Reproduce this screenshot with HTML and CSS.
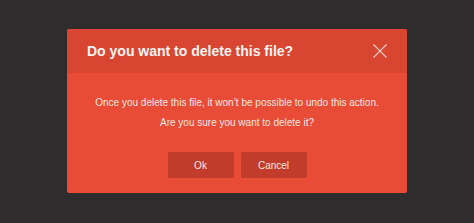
FILE: index.html
```html
<!DOCTYPE html>
<html lang="en">
<head>
    <meta charset="UTF-8">
    <title>Delete file</title>
    <link rel="stylesheet" href="styles.css">
</head>
<body>
    <div class="overlay">
        <div class="modal">
            <div class="modal-header">
                <h2>Do you want to delete this file?</h2>
                <button class="close-btn" aria-label="Close">
                    <svg width="14" height="14" viewBox="0 0 14 14">
                        <path d="M0.5 0.5 L13.5 13.5 M13.5 0.5 L0.5 13.5" stroke="#f4c9c0" stroke-width="1.2" fill="none"/>
                    </svg>
                </button>
            </div>
            <div class="modal-body">
                <p>Once you delete this file, it won’t be possible to undo this action.</p>
                <p>Are you sure you want to delete it?</p>
            </div>
            <div class="modal-actions">
                <button class="btn">Ok</button>
                <button class="btn">Cancel</button>
            </div>
        </div>
    </div>
</body>
</html>
```
FILE: styles.css
```css
:root {
    --backdrop: #2f2c2d;
    --modal-bg: #e84c36;
    --header-bg: #d84531;
    --btn-bg: #c13c2b;
    --text: #fbe7e3;
}

body {
    margin: 0;
    background-color: var(--backdrop);
    font-family: "Liberation Sans", Arial, sans-serif;
}

.overlay {
    height: 223px;
    padding-top: 29px;
    box-sizing: border-box;
}

.modal {
    width: 340px;
    margin-left: 67px;
    background-color: var(--modal-bg);
    border-radius: 2px;
    color: var(--text);
}

.modal-header {
    height: 44px;
    background-color: var(--header-bg);
    border-radius: 2px 2px 0 0;
    display: flex;
    align-items: center;
    justify-content: space-between;
    padding: 0 20px;
}

.modal-header h2 {
    margin: 0;
    font-size: 14px;
    font-weight: bold;
    color: #fff4f1;
}

.close-btn {
    background: none;
    border: none;
    padding: 0;
    display: flex;
}

.modal-body {
    text-align: center;
    padding-top: 24px;
}

.modal-body p {
    margin: 0 0 8px;
    font-size: 10px;
    line-height: 12px;
}

.modal-body p:last-child {
    margin-bottom: 0;
}

.modal-actions {
    display: flex;
    justify-content: center;
    gap: 7px;
    padding: 23px 0 15px;
}

.btn {
    width: 66px;
    height: 26px;
    border: none;
    border-radius: 2px;
    background-color: var(--btn-bg);
    color: var(--text);
    font-family: inherit;
    font-size: 10px;
}
```
